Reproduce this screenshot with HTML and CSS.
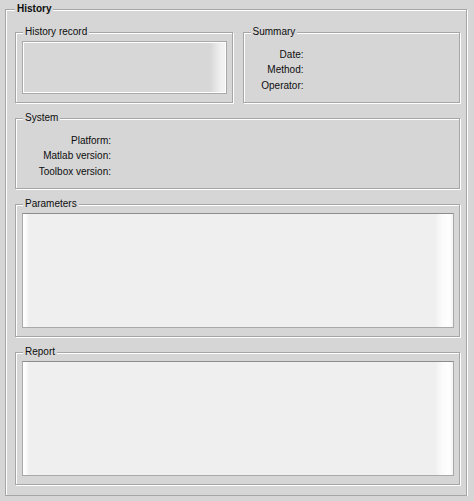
FILE: index.html
```html
<!DOCTYPE html>
<html>
<head>
<meta charset="utf-8">
<title>History</title>
<link rel="stylesheet" href="styles.css">
</head>
<body>
<div class="history">
  <div class="title outer-title">History</div>
  <div class="top-row">
    <div class="group">
      <div class="title">History record</div>
      <div class="listbox disabled"></div>
    </div>
    <div class="group fields-group">
      <div class="title">Summary</div>
      <div class="fields summary-fields">
        <div class="label">Date:</div>
        <div class="label">Method:</div>
        <div class="label">Operator:</div>
      </div>
    </div>
  </div>
  <div class="group fields-group">
    <div class="title">System</div>
    <div class="fields system-fields">
      <div class="label">Platform:</div>
      <div class="label">Matlab version:</div>
      <div class="label">Toolbox version:</div>
    </div>
  </div>
  <div class="group">
    <div class="title">Parameters</div>
    <div class="listbox"></div>
  </div>
  <div class="group">
    <div class="title">Report</div>
    <div class="listbox"></div>
  </div>
</div>
</body>
</html>
```
FILE: styles.css
```css
html, body {
  margin: 0;
  background: #d6d6d6;
}
body {
  font-family: "Liberation Sans", Arial, sans-serif;
  font-size: 10px;
  color: #0d0d0d;
}
.history {
  position: relative;
  box-sizing: border-box;
  width: 462px;
  height: 487px;
  margin: 9px 0 0 5px;
  border: 1px solid #a6a6a6;
  box-shadow: inset 1px 1px 0 #fff, 1px 1px 0 #fff;
  padding: 22px 6px 10px 9px;
  display: grid;
  grid-template-rows: 71px 71px 133px 133px;
  row-gap: 15px;
}
.top-row {
  display: grid;
  grid-template-columns: 1fr 1fr;
  column-gap: 10px;
}
.group {
  position: relative;
  box-sizing: border-box;
  border: 1px solid #a6a6a6;
  box-shadow: inset 1px 1px 0 #fff, 1px 1px 0 #fff;
  padding: 8px 5px 8px 6px;
  display: flex;
}
.title {
  position: absolute;
  top: -7px;
  left: 7px;
  padding: 0 2px;
  background: #d6d6d6;
  line-height: 12px;
  white-space: nowrap;
  color: #0d0d0d;
}
.outer-title {
  left: 9px;
  font-weight: bold;
}
.fields-group {
  padding: 14px 0 0 0;
}
.fields {
  display: flex;
  flex-direction: column;
  align-items: flex-end;
}
.summary-fields {
  width: 60px;
}
.system-fields {
  width: 95px;
}
.label {
  line-height: 15.4px;
  white-space: nowrap;
}
.listbox {
  flex: 1;
  box-sizing: border-box;
  border: 1px solid #a9a9a9;
  border-top-color: #8c8c8c;
  background:
    linear-gradient(to right, rgba(239,239,239,0) calc(100% - 18px), #fbfbfb calc(100% - 11px), #ffffff calc(100% - 4px), #f3f3f3 100%),
    linear-gradient(to right, #ffffff 0, #fbfbfb 3px, #efefef 6px, #efefef 100%);
}
.listbox.disabled {
  border-color: #a9a9a9;
  box-shadow: inset 1px 1px 0 #fff, inset -1px -1px 0 #fff;
  background:
    linear-gradient(to right, #d7d7d7 0, #d7d7d7 calc(100% - 16px), #f1f1f1 calc(100% - 5px), #f4f4f4 100%);
}
```
